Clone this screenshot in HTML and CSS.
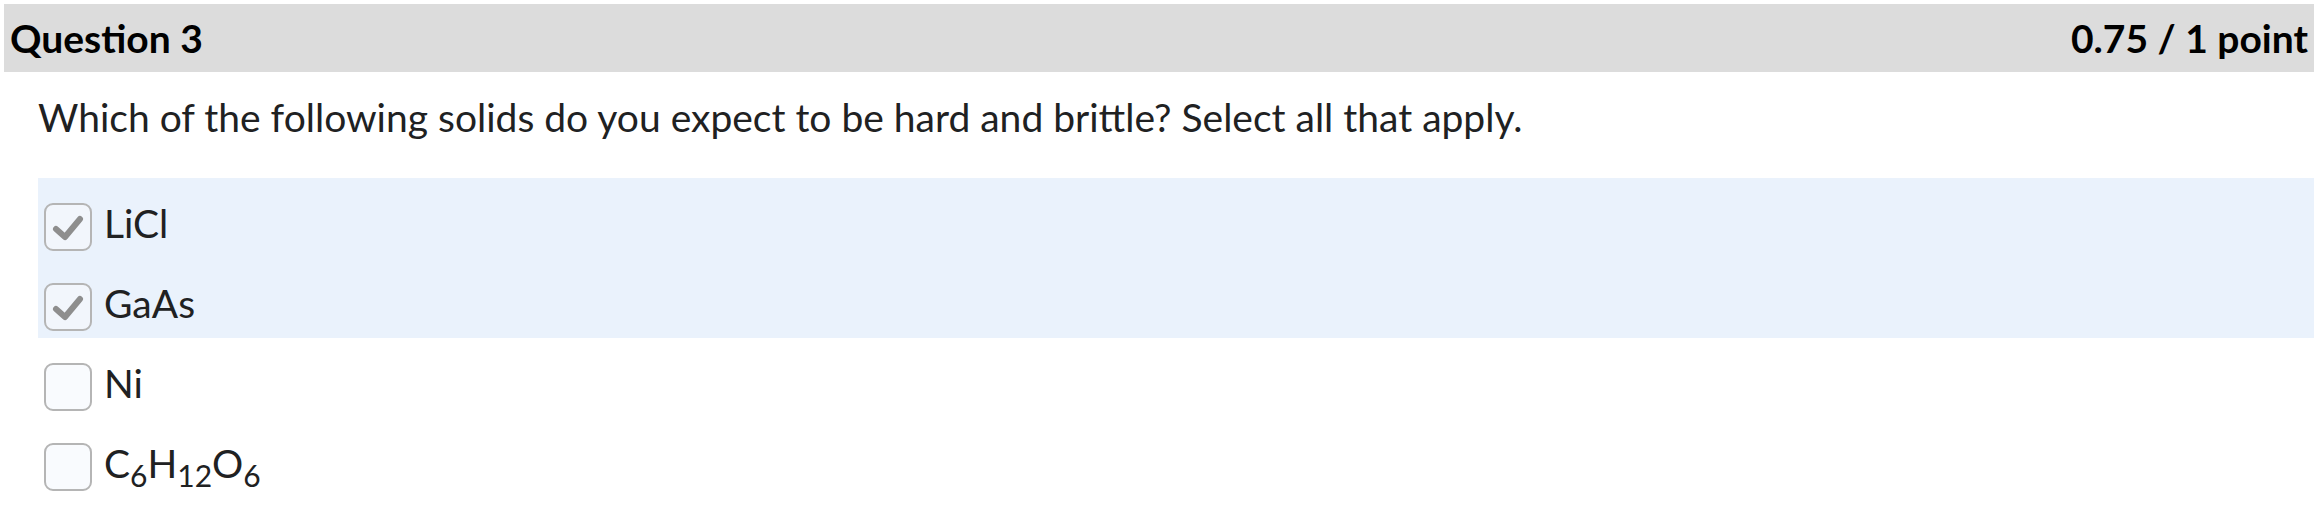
FILE: index.html
```html
<!DOCTYPE html>
<html lang="en">
<head>
    <meta charset="UTF-8">
    <title>Question 3</title>
    <link rel="stylesheet" href="styles.css">
</head>
<body>
    <div class="question">
        <div class="question-header">
            <h2>Question 3</h2>
            <span class="score">0.75 / 1 point</span>
        </div>

        <div class="question-body">
            <p class="prompt">Which of the following solids do you expect to be hard and brittle? Select all that apply.</p>

            <div class="options">
                <label class="option selected">
                    <span class="checkbox checked">
                        <svg viewBox="0 0 48 48"><polyline points="12,26 21,34 36,16"/></svg>
                    </span>
                    <span class="option-text">LiCl</span>
                </label>
                <label class="option selected">
                    <span class="checkbox checked">
                        <svg viewBox="0 0 48 48"><polyline points="12,26 21,34 36,16"/></svg>
                    </span>
                    <span class="option-text">GaAs</span>
                </label>
                <label class="option">
                    <span class="checkbox"></span>
                    <span class="option-text">Ni</span>
                </label>
                <label class="option">
                    <span class="checkbox"></span>
                    <span class="option-text">C<sub>6</sub>H<sub>12</sub>O<sub>6</sub></span>
                </label>
            </div>
        </div>
    </div>
</body>
</html>
```

FILE: styles.css
```css
body {
    font-family: Lato, 'Noto Sans', sans-serif;
    margin: 4px 0 0 4px;
    padding: 0;
    background: white;
    color: #202122;
    overflow: hidden;
}

.question-header {
    display: flex;
    justify-content: space-between;
    align-items: center;
    height: 68px;
    padding: 0 6px;
    background: #dcdcdc;
}

.question-header h2 {
    margin: 0;
    font-size: 39px;
    font-weight: bold;
    color: #000;
}

.score {
    font-size: 39px;
    font-weight: bold;
    color: #000;
}

.question-body {
    padding-left: 34px;
}

.prompt {
    margin: 22px 0 37px 0;
    font-size: 39px;
    line-height: 47px;
}

.options {
    display: flex;
    flex-direction: column;
}

.option {
    display: flex;
    align-items: flex-start;
    gap: 12px;
    height: 80px;
    box-sizing: border-box;
    padding: 25px 0 0 6px;
}

.option.selected {
    background: #eaf2fc;
}

.checkbox {
    width: 48px;
    height: 48px;
    box-sizing: border-box;
    border: 2px solid #b5b5b5;
    border-radius: 9px;
    background: #f9fbfe;
    flex-shrink: 0;
}

.checkbox.checked {
    background: #f2f6fc;
}

.checkbox svg {
    display: block;
    width: 48px;
    height: 48px;
    margin: -2px;
}

.checkbox polyline {
    fill: none;
    stroke: #8e8e8e;
    stroke-width: 6;
    stroke-linecap: round;
    stroke-linejoin: round;
}

.option-text {
    font-size: 39px;
    line-height: 38px;
    padding-top: 1px;
}

.option-text sub {
    font-size: 30px;
    line-height: 0;
    vertical-align: -9px;
}
```
